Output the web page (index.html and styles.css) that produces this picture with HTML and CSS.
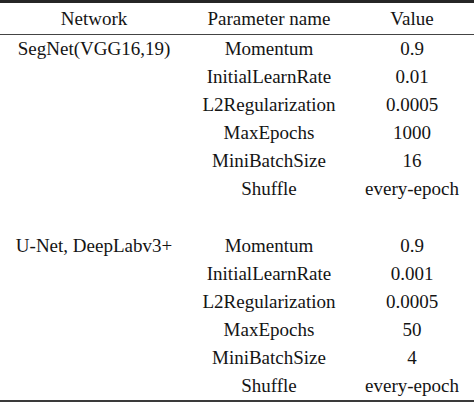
FILE: index.html
```html
<!DOCTYPE html>
<html>
<head>
<meta charset="utf-8">
<link rel="stylesheet" href="styles.css">
</head>
<body>
<table class="params">
  <colgroup>
    <col class="c1"><col class="c2"><col class="c3">
  </colgroup>
  <thead>
    <tr><th>Network</th><th>Parameter name</th><th>Value</th></tr>
  </thead>
  <tbody>
    <tr><td>SegNet(VGG16,19)</td><td>Momentum</td><td>0.9</td></tr>
    <tr><td></td><td>InitialLearnRate</td><td>0.01</td></tr>
    <tr><td></td><td>L2Regularization</td><td>0.0005</td></tr>
    <tr><td></td><td>MaxEpochs</td><td>1000</td></tr>
    <tr><td></td><td>MiniBatchSize</td><td>16</td></tr>
    <tr><td></td><td>Shuffle</td><td>every-epoch</td></tr>
    <tr class="gap"><td></td><td></td><td></td></tr>
    <tr><td>U-Net, DeepLabv3+</td><td>Momentum</td><td>0.9</td></tr>
    <tr><td></td><td>InitialLearnRate</td><td>0.001</td></tr>
    <tr><td></td><td>L2Regularization</td><td>0.0005</td></tr>
    <tr><td></td><td>MaxEpochs</td><td>50</td></tr>
    <tr><td></td><td>MiniBatchSize</td><td>4</td></tr>
    <tr><td></td><td>Shuffle</td><td>every-epoch</td></tr>
  </tbody>
</table>
</body>
</html>
```
FILE: styles.css
```css
html, body {
  margin: 0;
  padding: 0;
  background: #fff;
}
.params {
  width: 474px;
  border-collapse: collapse;
  table-layout: fixed;
  font-family: "Liberation Serif", "Times New Roman", serif;
  font-size: 19px;
  color: #141414;
  border-top: 3px solid #262626;
  border-bottom: 2px solid #3a3a3a;
}
.c1 { width: 188px; }
.c2 { width: 162px; }
.c3 { width: 124px; }
.params th {
  font-weight: normal;
  height: 31px;
  padding: 0;
  text-align: center;
  border-bottom: 1px solid #444;
  line-height: 31px;
}
.params td {
  height: 28.08px;
  padding: 0;
  text-align: center;
  line-height: 28px;
  white-space: nowrap;
}
```
